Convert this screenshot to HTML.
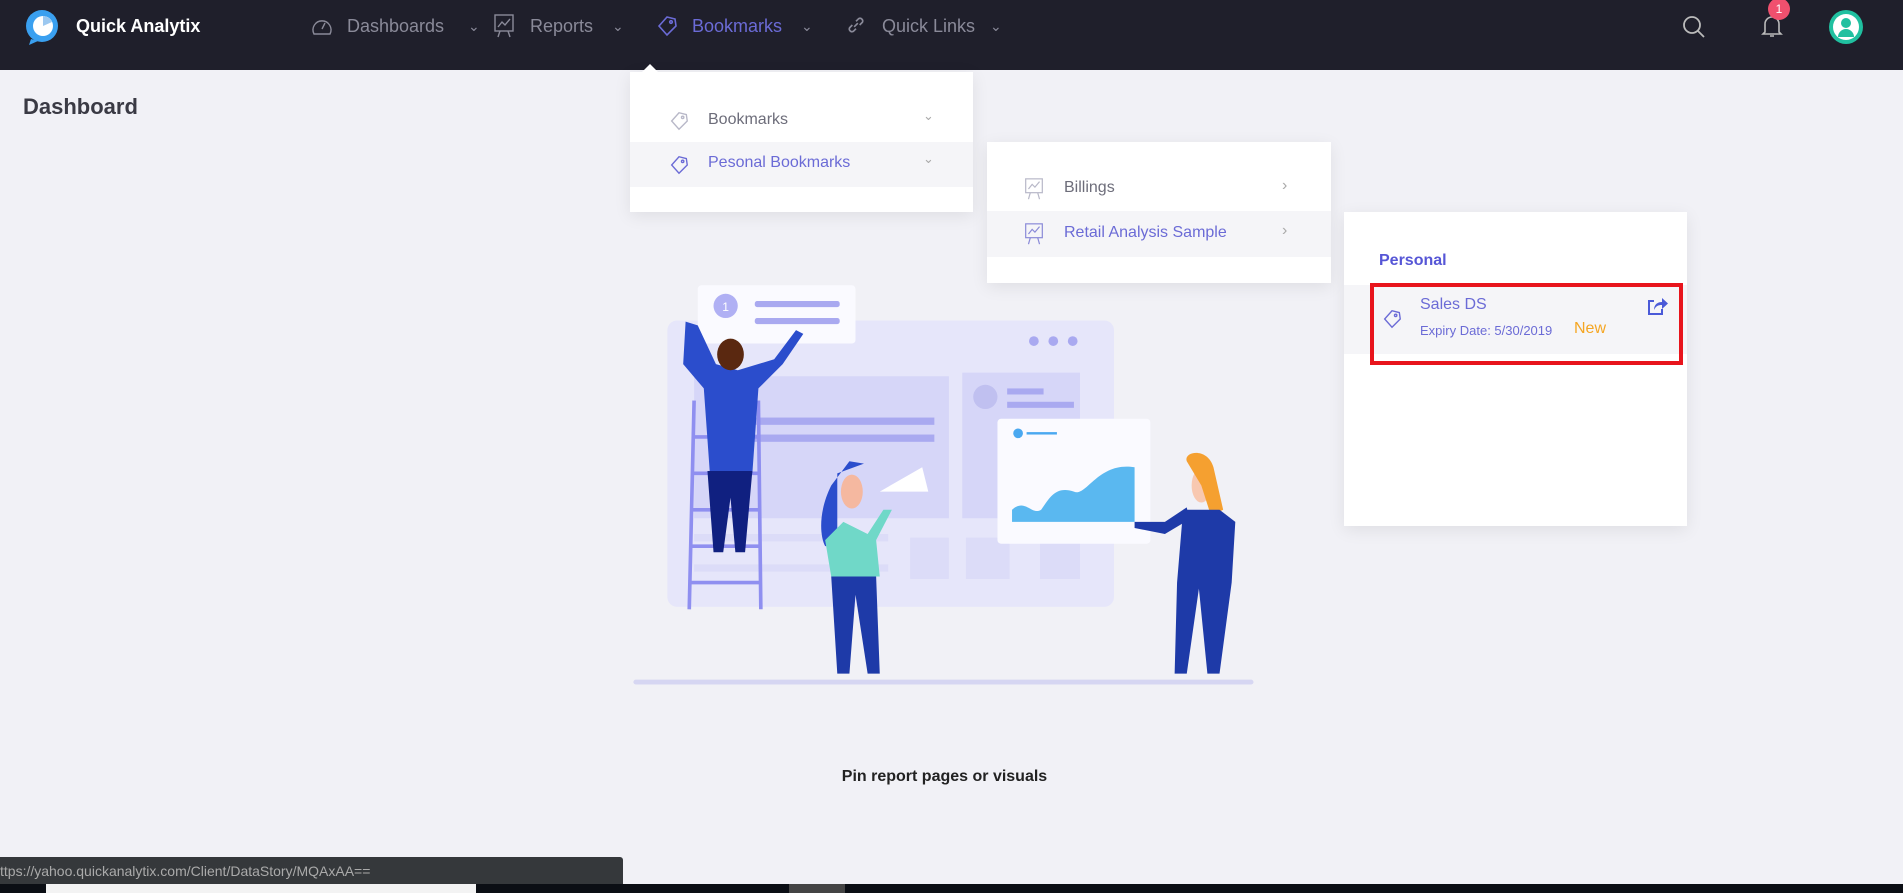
<!DOCTYPE html>
<html><head><meta charset="utf-8">
<style>
*{margin:0;padding:0;box-sizing:border-box}
body{width:1903px;height:893px;background:#f1f1f6;font-family:"Liberation Sans",sans-serif;position:relative;overflow:hidden}
.hdr{position:absolute;left:0;top:0;width:1903px;height:70px;background:#1f1f2b}
.abs{position:absolute}
.nav{position:absolute;top:15px;font-size:18px;color:#8a8a99;line-height:22px}
.dd{position:absolute;background:#fff;box-shadow:0 4px 16px rgba(0,0,0,.08)}
.it{position:absolute;left:0;right:0;font-size:16px;color:#6d6d7a}
</style></head><body>
<div class="hdr">
 <svg class="abs" style="left:25px;top:9px" width="36" height="36" viewBox="0 0 36 36"><circle cx="17" cy="17" r="16" fill="#3aa0f0"/><path d="M6 30 L4 36 L13 32Z" fill="#3aa0f0"/><circle cx="18" cy="17" r="10" fill="#fff"/><path d="M18 17 L18 7 A10 10 0 0 1 27 13Z" fill="#9cc8f0"/></svg>
 <div class="abs" style="left:76px;top:15px;color:#fff;font-size:18px;font-weight:bold;line-height:22px">Quick Analytix</div>
 <svg class="abs" style="left:310px;top:14px" width="24" height="24" viewBox="0 0 24 24" fill="none" stroke="#8a8a99" stroke-width="1.4"><path d="M4 20 A9 9 0 1 1 20 20Z"/><path d="M12 15 L15 9"/></svg>
 <div class="nav" style="left:347px">Dashboards</div><div class="nav" style="left:468px;font-size:14px">&#8964;</div>
 <svg class="abs" style="left:492px;top:13px" width="24" height="26" viewBox="0 0 24 26" fill="none" stroke="#8a8a99" stroke-width="1.4"><rect x="3" y="2" width="18" height="16"/><path d="M6 14 L10 9 L13 12 L18 6 M8 18 L6 24 M16 18 L18 24"/></svg>
 <div class="nav" style="left:530px">Reports</div><div class="nav" style="left:612px;font-size:14px">&#8964;</div>
 <svg class="abs" style="left:655px;top:14px" width="24" height="24" viewBox="0 0 24 24" fill="none" stroke="#6b6bd6" stroke-width="1.6"><path d="M4 12 L12 3 L20 5 L21 12 L12 21Z"/><circle cx="16" cy="8" r="1.3"/></svg>
 <div class="nav" style="left:692px;color:#6b6bd6">Bookmarks</div><div class="nav" style="left:801px;font-size:14px">&#8964;</div>
 <svg class="abs" style="left:845px;top:14px" width="22" height="22" viewBox="0 0 24 24" fill="none" stroke="#8a8a99" stroke-width="1.8"><path d="M10 14 L14 10 M8 12 L5 15 A3 3 0 0 0 9 19 L12 16 M16 12 L19 9 A3 3 0 0 0 15 5 L12 8"/></svg>
 <div class="nav" style="left:882px">Quick Links</div><div class="nav" style="left:990px;font-size:14px">&#8964;</div>
 <svg class="abs" style="left:1681px;top:14px" width="26" height="26" viewBox="0 0 26 26" fill="none" stroke="#bbb" stroke-width="1.8"><circle cx="11" cy="11" r="8"/><path d="M17 17 L23 23"/></svg>
 <svg class="abs" style="left:1760px;top:13px" width="24" height="26" viewBox="0 0 24 26" fill="none" stroke="#bbb" stroke-width="1.6"><path d="M5 19 L5 11 A7 7 0 0 1 19 11 L19 19 L21 21 L3 21Z M10 23 L14 23"/></svg>
 <div class="abs" style="left:1768px;top:-2px;width:22px;height:22px;border-radius:11px;background:#f0506e;color:#fff;font-size:12px;text-align:center;line-height:22px">1</div>
 <svg class="abs" style="left:1828px;top:9px" width="36" height="36" viewBox="0 0 36 36"><circle cx="18" cy="18" r="17" fill="#20c0a0"/><circle cx="18" cy="18" r="13" fill="#fff"/><circle cx="18" cy="14" r="5" fill="#20c0a0"/><path d="M10 28 A8 8 0 0 1 26 28Z" fill="#20c0a0"/></svg>
</div>
<div class="abs" style="left:23px;top:94px;font-size:22px;font-weight:bold;color:#3a3a44">Dashboard</div>

<div class="dd" style="left:630px;top:72px;width:343px;height:140px">
 <div class="abs" style="left:12px;top:-8px;width:0;height:0;border-left:8px solid transparent;border-right:8px solid transparent;border-bottom:8px solid #fff"></div>
 <div class="it" style="top:26px;height:46px">
  <svg class="abs" style="left:38px;top:12px" width="22" height="22" viewBox="0 0 24 24" fill="none" stroke="#b8b8c8" stroke-width="1.5"><path d="M4 12 L12 3 L20 5 L21 12 L12 21Z"/><circle cx="16" cy="8" r="1.3"/></svg>
  <div class="abs" style="left:78px;top:13px">Bookmarks</div><div class="abs" style="left:293px;top:10px;color:#aaa;font-size:13px">&#8964;</div></div>
 <div class="it" style="top:70px;height:45px;background:#f5f5f8;color:#6b6bd6">
  <svg class="abs" style="left:38px;top:12px" width="22" height="22" viewBox="0 0 24 24" fill="none" stroke="#6b6bd6" stroke-width="1.5"><path d="M4 12 L12 3 L20 5 L21 12 L12 21Z"/><circle cx="16" cy="8" r="1.3"/></svg>
  <div class="abs" style="left:78px;top:12px">Pesonal Bookmarks</div><div class="abs" style="left:293px;top:9px;color:#aaa;font-size:13px">&#8964;</div></div>
</div>

<div class="dd" style="left:987px;top:142px;width:344px;height:141px">
 <div class="it" style="top:24px;height:45px">
  <svg class="abs" style="left:35px;top:11px" width="24" height="24" viewBox="0 0 24 26" fill="none" stroke="#b8b8c8" stroke-width="1.3"><rect x="3" y="2" width="18" height="15"/><path d="M6 13 L10 8 L13 11 L18 5 M8 17 L6 24 M16 17 L18 24"/></svg>
  <div class="abs" style="left:77px;top:13px">Billings</div><div class="abs" style="left:295px;top:11px;color:#aaa">&#8250;</div></div>
 <div class="it" style="top:69px;height:46px;background:#f5f5f8;color:#6b6bd6">
  <svg class="abs" style="left:35px;top:11px" width="24" height="24" viewBox="0 0 24 26" fill="none" stroke="#8a8ad8" stroke-width="1.3"><rect x="3" y="2" width="18" height="15"/><path d="M6 13 L10 8 L13 11 L18 5 M8 17 L6 24 M16 17 L18 24"/></svg>
  <div class="abs" style="left:77px;top:13px">Retail Analysis Sample</div><div class="abs" style="left:295px;top:11px;color:#aaa">&#8250;</div></div>
</div>

<div class="dd" style="left:1344px;top:212px;width:343px;height:314px">
 <div class="abs" style="left:35px;top:40px;font-size:16px;font-weight:bold;color:#5656d6">Personal</div>
 <div class="abs" style="left:0;top:73px;width:343px;height:69px;background:#f5f5f8"></div>
</div>
<div class="abs" style="left:1370px;top:283px;width:313px;height:82px;border:4px solid #e8141c"></div>
<svg class="abs" style="left:1381px;top:308px" width="22" height="22" viewBox="0 0 24 24" fill="none" stroke="#6b6bd6" stroke-width="1.5"><path d="M4 12 L12 3 L20 5 L21 12 L12 21Z"/><circle cx="16" cy="8" r="1.3"/></svg>
<div class="abs" style="left:1420px;top:296px;font-size:16px;color:#6b6bd6">Sales DS</div>
<div class="abs" style="left:1420px;top:323px;font-size:13px;color:#6b6bd6">Expiry Date: 5/30/2019</div>
<div class="abs" style="left:1574px;top:320px;font-size:16px;color:#f5a623">New</div>
<svg class="abs" style="left:1646px;top:295px" width="24" height="22" viewBox="0 0 24 22"><path d="M2 5 L2 20 L17 20 L17 14 L15 14 L15 18 L4 18 L4 7 L8 7 L8 5Z" fill="#4a5ad8"/><path d="M8 15 C8 9 12 7 16 7 L16 3 L22 8.5 L16 14 L16 10 C12 10 10 11 8 15Z" fill="#4a5ad8"/></svg>

<svg class="abs" style="left:631px;top:279px" width="631" height="413" viewBox="520 230 520 340">
 <rect x="550" y="264" width="368" height="236" rx="8" fill="#e6e6fa"/>
 <circle cx="852" cy="281" r="4" fill="#a9a9f0"/><circle cx="868" cy="281" r="4" fill="#a9a9f0"/><circle cx="884" cy="281" r="4" fill="#a9a9f0"/>
 <rect x="572" y="310" width="210" height="117" fill="#d6d6f8"/>
 <rect x="620" y="344" width="150" height="6" fill="#a9a9f0"/><rect x="620" y="358" width="150" height="6" fill="#a9a9f0"/>
 <rect x="793" y="307" width="97" height="120" fill="#d6d6f8"/>
 <circle cx="812" cy="327" r="10" fill="#c0c0f0"/><rect x="830" y="320" width="30" height="5" fill="#a9a9f0"/><rect x="830" y="331" width="55" height="5" fill="#a9a9f0"/>
 <rect x="572" y="440" width="160" height="6" fill="#dcdcf8"/><rect x="572" y="465" width="160" height="6" fill="#dcdcf8"/>
 <rect x="750" y="443" width="32" height="34" fill="#dcdcf8"/><rect x="796" y="443" width="36" height="34" fill="#dcdcf8"/><rect x="857" y="443" width="33" height="34" fill="#dcdcf8"/>
 <rect x="575" y="235" width="130" height="48" rx="3" fill="#fafaff"/>
 <circle cx="598" cy="252" r="10" fill="#b0b0f4"/><text x="598" y="256" font-size="10" fill="#fff" text-anchor="middle" font-family="Liberation Sans">1</text>
 <rect x="622" y="248" width="70" height="5" rx="2" fill="#a9a9f0"/><rect x="622" y="262" width="70" height="5" rx="2" fill="#a9a9f0"/>
 <g stroke="#8f8ff0" stroke-width="3"><path d="M572 330 L568 502 M625 330 L627 502 M570 360 L625 360 M570 390 L625 390 M570 420 L625 420 M570 450 L625 450 M569 480 L626 480"/></g>
 <path d="M565 265 L563 300 L580 320 L585 390 L620 390 L625 320 L645 300 L662 275 L656 272 L638 296 L608 305 L590 300 L575 268Z" fill="#2b4dcc"/>
 <ellipse cx="602" cy="292" rx="11" ry="13" fill="#5a2810"/>
 <path d="M583 388 L588 455 L596 455 L602 410 L606 455 L614 455 L620 388Z" fill="#102080"/>
 <rect x="822" y="345" width="126" height="103" rx="3" fill="#fafaff"/>
 <circle cx="839" cy="357" r="4" fill="#4aa8f0"/><rect x="846" y="356" width="25" height="2" fill="#4aa8f0"/>
 <path d="M834 430 L834 420 C845 410 850 425 858 420 C865 410 870 400 885 405 C895 410 905 380 935 385 L935 430Z" fill="#5ab8f0"/>
 <path d="M685 400 C675 420 675 440 680 450 L690 450 L690 390 L712 382 L700 380Z" fill="#2b4dcc"/>
 <ellipse cx="702" cy="405" rx="9" ry="14" fill="#f5b8a0"/>
 <path d="M680 445 L685 475 L725 475 L722 445 L735 420 L728 420 L715 440 L695 430Z" fill="#70d8c8"/>
 <path d="M685 475 L690 555 L700 555 L705 490 L715 555 L725 555 L722 475Z" fill="#1e3aa8"/>
 <path d="M725 405 L760 385 L765 405Z" fill="#fff"/>
 <ellipse cx="990" cy="400" rx="8" ry="14" fill="#f8c8b0"/>
 <path d="M978 380 C975 372 995 368 1000 385 L1008 420 L998 425 L990 400 Z" fill="#f5a030"/>
 <path d="M975 420 L970 480 L968 555 L978 555 L988 485 L995 555 L1005 555 L1015 480 L1018 430 L1005 420 Z" fill="#1e3aa8"/>
 <path d="M935 430 L960 430 L978 418 L980 428 L960 440 L935 435Z" fill="#1e3aa8"/>
 <rect x="522" y="560" width="511" height="4" rx="2" fill="#d6d6f2"/>
</svg>

<div class="abs" style="left:0;top:768px;width:1903px;text-align:center;font-size:16px;font-weight:bold;color:#222"><span style="position:relative;left:-7px">Pin report pages or visuals</span></div>

<div class="abs" style="left:0;top:857px;width:623px;height:28px;background:#35383b;border-radius:0 3px 0 0;color:#aaa;font-size:14px;line-height:28px">ttps://yahoo.quickanalytix.com/Client/DataStory/MQAxAA==</div>
<div class="abs" style="left:0;top:884px;width:1903px;height:9px;background:#0b0e14"></div>
<div class="abs" style="left:46px;top:884px;width:430px;height:9px;background:#f3f3f3"></div>
<div class="abs" style="left:789px;top:884px;width:56px;height:9px;background:#444"></div>
</body></html>
